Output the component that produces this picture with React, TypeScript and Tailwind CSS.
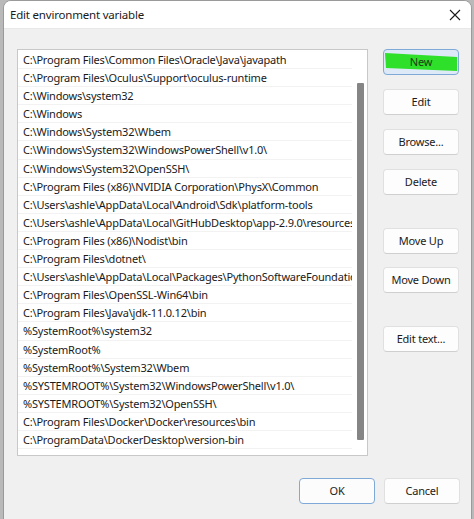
import React from "react";

const rows = [
  "C:\\Program Files\\Common Files\\Oracle\\Java\\javapath",
  "C:\\Program Files\\Oculus\\Support\\oculus-runtime",
  "C:\\Windows\\system32",
  "C:\\Windows",
  "C:\\Windows\\System32\\Wbem",
  "C:\\Windows\\System32\\WindowsPowerShell\\v1.0\\",
  "C:\\Windows\\System32\\OpenSSH\\",
  "C:\\Program Files (x86)\\NVIDIA Corporation\\PhysX\\Common",
  "C:\\Users\\ashle\\AppData\\Local\\Android\\Sdk\\platform-tools",
  "C:\\Users\\ashle\\AppData\\Local\\GitHubDesktop\\app-2.9.0\\resources\\app\\git\\cmd",
  "C:\\Program Files (x86)\\Nodist\\bin",
  "C:\\Program Files\\dotnet\\",
  "C:\\Users\\ashle\\AppData\\Local\\Packages\\PythonSoftwareFoundation.Python.3.9",
  "C:\\Program Files\\OpenSSL-Win64\\bin",
  "C:\\Program Files\\Java\\jdk-11.0.12\\bin",
  "%SystemRoot%\\system32",
  "%SystemRoot%",
  "%SystemRoot%\\System32\\Wbem",
  "%SYSTEMROOT%\\System32\\WindowsPowerShell\\v1.0\\",
  "%SYSTEMROOT%\\System32\\OpenSSH\\",
  "C:\\Program Files\\Docker\\Docker\\resources\\bin",
  "C:\\ProgramData\\DockerDesktop\\version-bin",
];

function Btn({ label, primary }: { label: string; primary?: boolean }) {
  return (
    <div
      className={
        "w-[76px] h-[26px] flex items-center justify-center rounded-[4px] border text-[11px] tracking-[-0.2px] text-[#1b1b1b] whitespace-nowrap " +
        (primary
          ? "border-[#7fa9d6] bg-[#fcfcfc]"
          : "border-[#e0e0e0] border-b-[#cfcfcf] bg-[#fdfdfd]")
      }
    >
      {label}
    </div>
  );
}

export default function App() {
  return (
    <div
      className="w-[474px] h-[519px] bg-[#b9b9b9] overflow-hidden"
      style={{ fontFamily: '"Noto Sans", "Open Sans", sans-serif' }}
    >
      <div className="ml-[3px] w-[469px] h-[530px] rounded-t-[8px] border border-[#9a9a9a] bg-[#f0f0f0] overflow-hidden flex flex-col">
        <div className="h-[28px] bg-white flex items-center justify-between pl-[6px] pr-[8px] border-b border-[#e8e8e8]">
          <span className="text-[11.5px] tracking-[-0.2px] text-[#1a1a1a]">Edit environment variable</span>
          <svg width="12" height="12" viewBox="0 0 12 12" className="mr-[2px]">
            <path d="M1 1 L11 11 M11 1 L1 11" stroke="#1a1a1a" strokeWidth="1.1" />
          </svg>
        </div>
        <div className="flex pl-[13px] pt-[20px]">
          <div className="relative w-[351px] h-[407px] bg-white border border-[#c8c8c8] pt-[1px]">
            {rows.map((r, i) => (
              <div
                key={i}
                className="h-[18.1px] w-[334px] overflow-hidden whitespace-nowrap border-b border-[#f2f2f2] pl-[5px] text-[11px] tracking-[-0.2px] leading-[18px] text-[#1a1a1a]"
              >
                {r}
              </div>
            ))}
            <div className="absolute right-[3px] top-[33px] w-[7px] h-[357px] bg-[#858585] rounded-[1px]" />
          </div>
          <div className="ml-[15px] flex flex-col">
            <div className="relative">
              <div className="w-[76px] h-[26px] flex items-center justify-center rounded-[4px] border border-[#7fa9d6] bg-[#dde9f6] text-[11px] text-[#1b1b1b]">
                &nbsp;
              </div>
              <svg
                className="absolute left-0 top-0"
                width="76"
                height="26"
                viewBox="0 0 76 26"
              >
                <path d="M2 4 L74 8 L74 22 L3 19 Z" fill="#2ee02a" />
              </svg>
              <div className="absolute inset-0 flex items-center justify-center text-[11px] tracking-[-0.2px] text-[#1d3b12]">
                New
              </div>
            </div>
            <div className="mt-[14px]"><Btn label="Edit" /></div>
            <div className="mt-[14px]"><Btn label="Browse..." /></div>
            <div className="mt-[14px]"><Btn label="Delete" /></div>
            <div className="mt-[33px]"><Btn label="Move Up" /></div>
            <div className="mt-[13px]"><Btn label="Move Down" /></div>
            <div className="mt-[33px]"><Btn label="Edit text..." /></div>
          </div>
        </div>
        <div className="flex justify-end pr-[11px] pt-[22px] gap-[9px]">
          <Btn label="OK" primary />
          <Btn label="Cancel" />
        </div>
      </div>
    </div>
  );
}
